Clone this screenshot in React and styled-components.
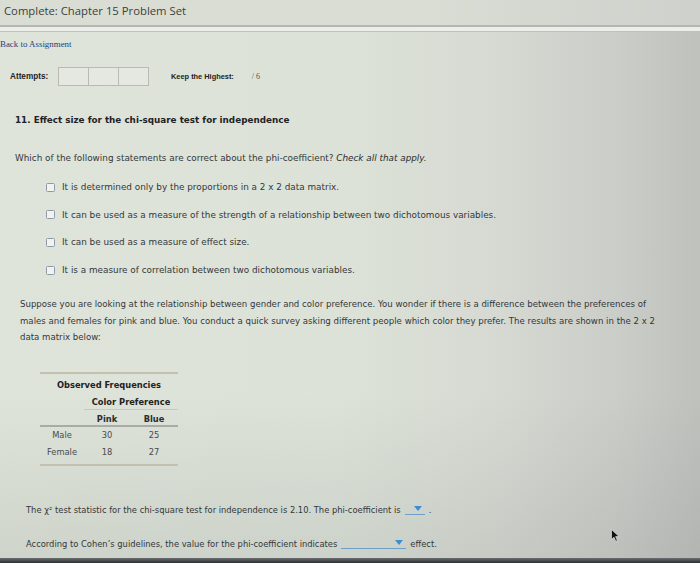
import React from "react";
import styled, { createGlobalStyle } from "styled-components";

const Global = createGlobalStyle`
  html, body { margin: 0; padding: 0; background: #c9cbc6; }
  * { box-sizing: border-box; }
`;

const Page = styled.div`
  position: relative;
  width: 700px;
  height: 563px;
  overflow: hidden;
  display: flex;
  flex-direction: column;
  font-family: "DejaVu Sans", Verdana, sans-serif;
  color: #34383a;
  background:
    linear-gradient(180deg, rgba(0,0,0,0) 0%, rgba(0,0,0,0) 70%, rgba(60,70,70,0.10) 100%),
    linear-gradient(90deg, #dfe4da 0%, #dce2d8 50%, #d6d9d2 72%, #cbcdc8 88%, #bfc1bd 100%);
`;

const TitleBar = styled.div`
  height: 25px;
  padding: 3px 0 0 4px;
  font-family: "Open Sans", "Liberation Sans", sans-serif;
  font-size: 11.3px;
  color: #3c3f40;
  background: linear-gradient(90deg, #d9ddd3 0%, #d9ddd4 60%, #cfd1cc 100%);
`;

const Separator = styled.div`
  height: 7px;
  border-top: 2px solid #b4b7b1;
  border-bottom: 1px solid #bfc2bc;
  background: #eceee9;
`;

const BackLink = styled.a`
  margin: 7px 0 0 0;
  font-family: "Liberation Serif", "Times New Roman", serif;
  font-size: 8.9px;
  color: #27407a;
  text-decoration: none;
`;

const AttemptsRow = styled.div`
  display: flex;
  align-items: center;
  margin: 18px 0 0 10px;
  font-family: "Liberation Sans", Arial, sans-serif;
  font-weight: bold;
  font-size: 8.2px;
  color: #222;
`;

const Label = styled.span`
  width: ${(p) => p.$w}px;
  font-size: ${(p) => p.$size || 8.2}px;
`;

const Boxes = styled.div`
  display: flex;
  margin-right: 22px;
`;

const Box = styled.div`
  width: 31px;
  height: 19px;
  border: 1px solid #b8bbb5;
  margin-left: -1px;
  background: #e4e8e0;
  &:first-child { margin-left: 0; }
`;

const Score = styled.span`
  font-family: "Liberation Serif", serif;
  font-weight: normal;
  font-size: 8px;
  color: #555;
  margin-left: 18px;
`;

const Heading = styled.h2`
  margin: 29px 0 0 15px;
  font-size: 8.8px;
  font-weight: bold;
  color: #1f2224;
`;

const Question = styled.p`
  margin: 28px 0 0 15px;
  font-size: 8.85px;
  color: #33373a;
  em { color: #2a2d2f; }
`;

const Options = styled.div`
  display: flex;
  flex-direction: column;
  gap: 17.7px;
  margin: 19px 0 0 46px;
`;

const Option = styled.label`
  display: flex;
  align-items: center;
  gap: 7px;
  font-size: 8.85px;
  color: #33373a;
  height: 10px;
`;

const Check = styled.span`
  width: 9px;
  height: 9px;
  border: 1px solid #8f9aa6;
  border-radius: 1.5px;
  background: #f1f3ef;
`;

const Paragraph = styled.p`
  margin: 21px 0 0 20px;
  width: 645px;
  font-size: 8.6px;
  line-height: 16.5px;
  color: #33373a;
`;

const Table = styled.div`
  margin: 26px 0 0 40px;
  width: 138px;
  display: grid;
  grid-template-columns: 44px 46px 48px;
  font-size: 8.3px;
  color: #3a3e40;
  border-top: 2px solid #c3c0ad;
  border-bottom: 2px solid #c3c0ad;
  padding-bottom: 6px;
`;

const Caption = styled.div`
  grid-column: 1 / span 3;
  text-align: center;
  font-weight: bold;
  color: #222;
  padding: 6px 0 0 0;
  height: 23px;
`;

const Group = styled.div`
  grid-column: 2 / span 2;
  text-align: center;
  font-weight: bold;
  color: #222;
  height: 13px;
  border-bottom: 1px solid #c6c9c2;
`;

const Head = styled.div`
  grid-column: ${(p) => p.$col};
  text-align: center;
  font-weight: bold;
  color: #2a2d2f;
  padding-top: 4px;
  height: 17px;
  border-bottom: 2px solid #a9aca6;
`;

const Cell = styled.div`
  text-align: center;
  padding-top: ${(p) => (p.$first ? 3 : 5)}px;
  height: ${(p) => (p.$first ? 15 : 16)}px;
  color: #474b4d;
`;

const Sentence = styled.div`
  display: flex;
  align-items: flex-end;
  margin: ${(p) => p.$top}px 0 0 26px;
  font-size: 8.35px;
  color: #33373a;
`;

const Drop = styled.span`
  position: relative;
  display: inline-block;
  width: ${(p) => p.$w}px;
  height: 10px;
  margin: 0 4px 0 4px;
  border-bottom: 1px solid #6e9fc7;
  svg {
    position: absolute;
    right: 3px;
    top: 1px;
  }
`;

const Bezel = styled.div`
  position: absolute;
  left: 0;
  right: 0;
  bottom: 0;
  height: 5px;
  background: linear-gradient(180deg, #6b6e70, #2c2f31);
`;

const Cursor = styled.svg`
  position: absolute;
  left: 611px;
  top: 529px;
`;

const Arrow = () => (
  <svg width="8" height="5" viewBox="0 0 8 5">
    <path d="M0 0 L8 0 L4 5 Z" fill="#3b8fd0" />
  </svg>
);

export default function App() {
  return (
    <>
      <Global />
      <Page>
        <TitleBar>Complete: Chapter 15 Problem Set</TitleBar>
        <Separator />
        <BackLink href="#">Back to Assignment</BackLink>
        <AttemptsRow>
          <Label $w={48}>Attempts:</Label>
          <Boxes>
            <Box />
            <Box />
            <Box />
          </Boxes>
          <Label $size={7.4}>Keep the Highest:</Label>
          <Score>/ 6</Score>
        </AttemptsRow>
        <Heading>11. Effect size for the chi-square test for independence</Heading>
        <Question>
          Which of the following statements are correct about the phi-coefficient? <em>Check all that apply.</em>
        </Question>
        <Options>
          <Option><Check />It is determined only by the proportions in a 2 x 2 data matrix.</Option>
          <Option><Check />It can be used as a measure of the strength of a relationship between two dichotomous variables.</Option>
          <Option><Check />It can be used as a measure of effect size.</Option>
          <Option><Check />It is a measure of correlation between two dichotomous variables.</Option>
        </Options>
        <Paragraph>
          Suppose you are looking at the relationship between gender and color preference. You wonder if there is a difference between the preferences of males and females for pink and blue. You conduct a quick survey asking different people which color they prefer. The results are shown in the 2 x 2 data matrix below:
        </Paragraph>
        <Table>
          <Caption>Observed Frequencies</Caption>
          <Group>Color Preference</Group>
          <Head $col={1} />
          <Head $col={2}>Pink</Head>
          <Head $col={3}>Blue</Head>
          <Cell $first>Male</Cell>
          <Cell $first>30</Cell>
          <Cell $first>25</Cell>
          <Cell>Female</Cell>
          <Cell>18</Cell>
          <Cell>27</Cell>
        </Table>
        <Sentence $top={39}>
          The χ² test statistic for the chi-square test for independence is 2.10. The phi-coefficient is
          <Drop $w={20}><Arrow /></Drop>.
        </Sentence>
        <Sentence $top={24}>
          According to Cohen’s guidelines, the value for the phi-coefficient indicates
          <Drop $w={65}><Arrow /></Drop>effect.
        </Sentence>
        <Cursor width="9" height="13" viewBox="0 0 9 13">
          <path d="M0.5 0.5 L0.5 10.5 L3 8.2 L4.8 12.3 L6.3 11.6 L4.6 7.6 L8 7.6 Z" fill="#111" stroke="#eee" strokeWidth="0.6" />
        </Cursor>
        <Bezel />
      </Page>
    </>
  );
}
